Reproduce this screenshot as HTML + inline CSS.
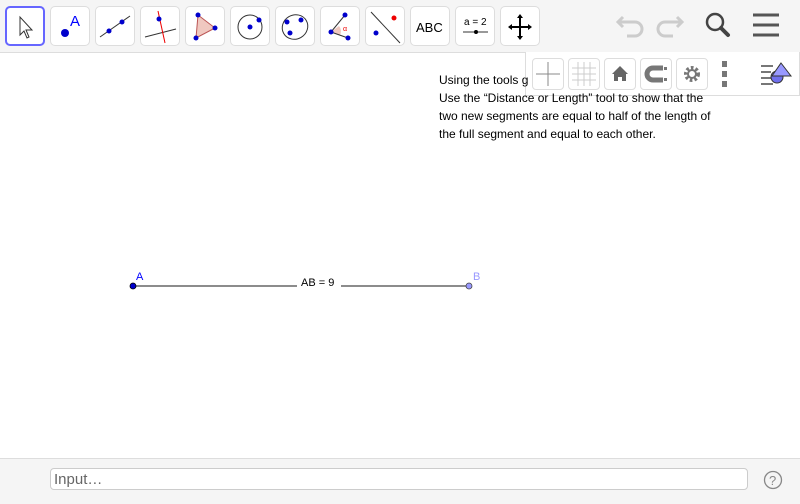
<!DOCTYPE html><html><head><style>
body{margin:0;width:800px;height:503px;position:relative;overflow:hidden;background:#fff;font-family:"Liberation Sans",sans-serif}
.tb{position:absolute;left:0;top:0;width:800px;height:52px;background:#f5f5f5;border-bottom:1px solid #ddd}
.b{position:absolute;top:6px;width:38px;height:38px;border:1px solid #ddd;border-radius:5px;background:#fff}
.b svg{position:absolute;left:0;top:0}
.sb{position:absolute;left:525px;top:52px;width:273px;height:43px;background:#fff;border:1px solid #ddd;border-top:none}
.s{position:absolute;top:6px;width:30px;height:30px;border:1px solid #ddd;border-radius:4px}
.txt{position:absolute;left:439px;top:71px;font-size:12px;line-height:18px;color:#000}
.bot{position:absolute;left:0;top:458px;width:800px;height:45px;background:#f5f5f5;border-top:1px solid #ddd}
.inp{position:absolute;left:50px;top:9px;height:22px;background:#fff;border:1px solid #ccc;border-radius:4px;font-size:15px;color:#666;line-height:22px;padding-left:3px;box-sizing:border-box;width:698px}
</style></head><body>
<div class="tb">
<div class="b" style="left:5px;border:2px solid #6666ff;width:36px;height:36px"><svg width="36" height="36"><path d="M13 9 L13 27 L17 23 L20 30 L22 29 L19 22 L25 22 Z" fill="#fff" stroke="#333" stroke-width="1"/></svg></div>
<div class="b" style="left:50px"><svg width="38" height="38"><circle cx="14" cy="26" r="4" fill="#00c"/><text x="19" y="19" font-size="15" fill="#00f" font-family="Liberation Sans">A</text></svg></div>
<div class="b" style="left:95px"><svg width="38" height="38"><line x1="4" y1="30" x2="34" y2="9" stroke="#333"/><circle cx="13" cy="24" r="2.5" fill="#00c"/><circle cx="26" cy="15" r="2.5" fill="#00c"/></svg></div>
<div class="b" style="left:140px"><svg width="38" height="38"><line x1="4" y1="30" x2="35" y2="22" stroke="#333"/><line x1="17" y1="4" x2="24" y2="36" stroke="#e00"/><circle cx="18" cy="12" r="2.5" fill="#00c"/></svg></div>
<div class="b" style="left:185px"><svg width="38" height="38"><path d="M12 8 L29 21 L10 31Z" fill="#f0c8c0" stroke="#b55"/><circle cx="12" cy="8" r="2.5" fill="#00c"/><circle cx="29" cy="21" r="2.5" fill="#00c"/><circle cx="10" cy="31" r="2.5" fill="#00c"/></svg></div>
<div class="b" style="left:230px"><svg width="38" height="38"><circle cx="19" cy="20" r="12" fill="none" stroke="#333"/><circle cx="19" cy="20" r="2.5" fill="#00c"/><circle cx="28" cy="13" r="2.5" fill="#00c"/></svg></div>
<div class="b" style="left:275px"><svg width="38" height="38"><ellipse cx="19" cy="20" rx="13" ry="12" fill="none" stroke="#333" transform="rotate(-30 19 20)"/><circle cx="11" cy="15" r="2.5" fill="#00c"/><circle cx="25" cy="13" r="2.5" fill="#00c"/><circle cx="14" cy="26" r="2.5" fill="#00c"/></svg></div>
<div class="b" style="left:320px"><svg width="38" height="38"><path d="M10 25 L18 19 A8 8 0 0 1 19 28Z" fill="#f0c8c0"/><line x1="10" y1="25" x2="24" y2="8" stroke="#333"/><line x1="10" y1="25" x2="27" y2="31" stroke="#333"/><circle cx="10" cy="25" r="2.5" fill="#00c"/><circle cx="24" cy="8" r="2.5" fill="#00c"/><circle cx="27" cy="31" r="2.5" fill="#00c"/><text x="22" y="24" font-size="7" fill="#e00">α</text></svg></div>
<div class="b" style="left:365px"><svg width="38" height="38"><line x1="5" y1="5" x2="34" y2="36" stroke="#333"/><circle cx="10" cy="26" r="2.5" fill="#00c"/><circle cx="28" cy="11" r="2.5" fill="#e00"/></svg></div>
<div class="b" style="left:410px"><svg width="38" height="38"><text x="5" y="25" font-size="13" fill="#000" font-family="Liberation Sans">ABC</text></svg></div>
<div class="b" style="left:455px"><svg width="38" height="38"><text x="8" y="18" font-size="10" fill="#000" font-family="Liberation Sans">a = 2</text><line x1="7" y1="25" x2="32" y2="25" stroke="#333"/><circle cx="20" cy="25" r="2" fill="#000"/></svg></div>
<div class="b" style="left:500px"><svg width="38" height="38"><path d="M19 9V31M9 20H29" stroke="#000" stroke-width="2"/><path d="M19 7l-3 4h6zM19 33l-3-4h6zM7 20l4-3v6zM31 20l-4-3v6z" fill="#000"/></svg></div>
<svg style="position:absolute;left:615px;top:10px" width="180" height="34"><path d="M8 7 L3 12 L8 17 M3 12 H20 A7 7 0 0 1 20 26 H12" fill="none" stroke="#ccc" stroke-width="3"/><path d="M62 7 L67 12 L62 17 M67 12 H50 A7 7 0 0 0 50 26 H58" fill="none" stroke="#ccc" stroke-width="3"/><circle cx="100" cy="12" r="8" fill="none" stroke="#444" stroke-width="2.5"/><line x1="106" y1="18" x2="113" y2="25" stroke="#444" stroke-width="4" stroke-linecap="round"/><path d="M138 5H164M138 15H164M138 25H164" stroke="#555" stroke-width="3"/></svg>
</div>
<div class="sb">
<div class="s" style="left:6px"><svg width="30" height="30"><path d="M15 3V27M3 15H27" stroke="#888"/></svg></div>
<div class="s" style="left:42px"><svg width="30" height="30"><path d="M9 3V27M15 3V27M21 3V27M3 9H27M3 15H27M3 21H27" stroke="#ccc"/></svg></div>
<div class="s" style="left:78px"><svg width="30" height="30"><path d="M7 15L15 7L23 15H21V22H17V18H13V22H9V15Z" fill="#666"/></svg></div>
<div class="s" style="left:114px"><svg width="30" height="30"><path d="M22 9H12A6 6 0 0 0 12 21H22" fill="none" stroke="#777" stroke-width="5"/><path d="M23 8h3v3h-3zM23 19h3v3h-3z" fill="#777"/></svg></div>
<div class="s" style="left:150px"><svg width="30" height="30"><circle cx="15" cy="15" r="6" fill="none" stroke="#777" stroke-width="4" stroke-dasharray="2.5 2"/><circle cx="15" cy="15" r="4" fill="none" stroke="#777" stroke-width="2"/></svg></div>
<svg style="position:absolute;left:196px;top:9px" width="8" height="28"><rect x="0" y="0" width="5" height="6" fill="#777"/><rect x="0" y="10" width="5" height="6" fill="#777"/><rect x="0" y="20" width="5" height="6" fill="#777"/></svg>
<svg style="position:absolute;left:233px;top:8px" width="40" height="28"><path d="M2 6H14M2 12H12M2 18H12M2 24H14" stroke="#777" stroke-width="2"/><circle cx="18" cy="17" r="6" fill="#7070ee" stroke="#333"/><path d="M22 3L32 16H13Z" fill="#9999ff" stroke="#333"/></svg>
</div>
<div class="txt">Using the tools g<br>Use the “Distance or Length” tool to show that the<br>two new segments are equal to half of the length of<br>the full segment and equal to each other.</div>
<svg style="position:absolute;left:125px;top:268px" width="360" height="24"><line x1="8" y1="18" x2="172" y2="18" stroke="#666" stroke-width="1.5"/><line x1="216" y1="18" x2="344" y2="18" stroke="#666" stroke-width="1.5"/><circle cx="8" cy="18" r="3" fill="#00c" stroke="#000" stroke-width=".8"/><circle cx="344" cy="18" r="3" fill="#99f" stroke="#444" stroke-width=".8"/><text x="11" y="12" font-size="11" fill="#00f" font-family="Liberation Sans">A</text><text x="348" y="12" font-size="11" fill="#99f" font-family="Liberation Sans">B</text><text x="176" y="18" font-size="11" fill="#000" font-family="Liberation Sans">AB = 9</text></svg>
<div class="bot"><div class="inp">Input…</div>
<svg style="position:absolute;left:763px;top:11px" width="20" height="20"><circle cx="10" cy="10" r="8.5" fill="none" stroke="#888" stroke-width="1.3"/><text x="6" y="15" font-size="13" fill="#888" font-family="Liberation Sans">?</text></svg></div>
</body></html>
